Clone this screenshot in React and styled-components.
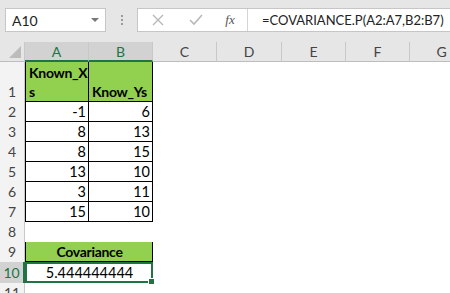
import React from 'react';
import styled, { createGlobalStyle } from 'styled-components';

const GlobalStyle = createGlobalStyle`
  html, body {
    margin: 0;
    padding: 0;
    background: #ffffff;
    overflow: hidden;
  }
  body {
    font-family: Lato, "Open Sans", sans-serif;
  }
`;

const COLS = '25px 64px 64px 64px 65px 64px 64px 64px';
const GREEN = '#217346';
const FILL = '#92d050';

const Window = styled.div`
  width: 450px;
  height: 293px;
  overflow: hidden;
  display: flex;
  flex-direction: column;
  background: #ffffff;
`;

const FormulaBar = styled.div`
  height: 42px;
  flex: none;
  background: #e6e6e6;
  display: flex;
  align-items: flex-start;
  padding-top: 8px;
  box-sizing: border-box;
`;

const NameBox = styled.div`
  margin-left: 5px;
  width: 101px;
  flex: none;
  height: 24px;
  box-sizing: border-box;
  background: #ffffff;
  border: 1px solid #c6c6c6;
  display: flex;
  align-items: center;
  justify-content: space-between;
  padding: 0 6px 0 6px;
  font-size: 14px;
  color: #222;
`;

const Caret = styled.span`
  width: 0;
  height: 0;
  border-left: 4px solid transparent;
  border-right: 4px solid transparent;
  border-top: 4px solid #777;
`;

const Grip = styled.div`
  width: 31px;
  flex: none;
  height: 24px;
  display: flex;
  flex-direction: column;
  align-items: center;
  justify-content: center;
  gap: 2px;
  span {
    width: 2px;
    height: 2px;
    background: #9a9a9a;
  }
`;

const FormulaBox = styled.div`
  flex: 1;
  min-width: 0;
  height: 24px;
  box-sizing: border-box;
  background: #ffffff;
  border: 1px solid #c6c6c6;
  border-right: none;
  display: flex;
  align-items: center;
  overflow: hidden;
`;

const FxButtons = styled.div`
  width: 110px;
  flex: none;
  height: 100%;
  display: flex;
  align-items: center;
  position: relative;
  &::after {
    content: '';
    position: absolute;
    right: 0;
    top: 0;
    bottom: 0;
    width: 1px;
    background: #d4d4d4;
  }
`;

const IconSlot = styled.div`
  width: ${({ $w }) => $w}px;
  display: flex;
  justify-content: center;
  align-items: center;
`;

const FxGlyph = styled.span`
  font-family: "Liberation Serif", serif;
  font-style: italic;
  font-size: 13px;
  color: #555;
`;

const FormulaText = styled.div`
  padding-left: 14px;
  font-size: 13px;
  color: #222;
  white-space: nowrap;
`;

const Sheet = styled.div`
  flex: 1;
  display: flex;
  flex-direction: column;
`;

const Row = styled.div`
  display: grid;
  grid-template-columns: ${COLS};
  grid-template-rows: ${({ $h }) => $h}px;
  height: ${({ $h }) => $h}px;
  flex: none;
`;

const Corner = styled.div`
  background: #e6e6e6;
  border-right: 1px solid #c8c8c8;
  border-bottom: 1px solid #bdbdbd;
  position: relative;
  &::after {
    content: '';
    position: absolute;
    right: 3px;
    bottom: 3px;
    width: 0;
    height: 0;
    border-left: 12px solid transparent;
    border-bottom: 12px solid #bcbcbc;
  }
`;

const ColHead = styled.div`
  background: ${({ $sel }) => ($sel ? '#d2d2d2' : '#e6e6e6')};
  color: ${({ $sel }) => ($sel ? GREEN : '#444')};
  border-right: 1px solid #c8c8c8;
  border-bottom: ${({ $sel }) => ($sel ? `2px solid ${GREEN}` : '1px solid #bdbdbd')};
  display: flex;
  align-items: center;
  justify-content: center;
  font-size: 14px;
  box-sizing: border-box;
`;

const RowHead = styled.div`
  background: ${({ $sel }) => ($sel ? '#d2d2d2' : '#f3f3f3')};
  color: ${({ $sel }) => ($sel ? GREEN : '#444')};
  border-right: ${({ $sel }) => ($sel ? `2px solid ${GREEN}` : '1px solid #c8c8c8')};
  display: flex;
  align-items: flex-end;
  justify-content: center;
  padding-bottom: 1px;
  font-size: 14px;
  line-height: 18px;
  box-sizing: border-box;
  overflow: hidden;
`;

const Cell = styled.div`
  grid-column: span ${({ $span }) => $span || 1};
  background: ${({ $fill }) => $fill || '#ffffff'};
  box-sizing: border-box;
  min-height: 0;
  overflow: hidden;
  border-left: ${({ $first }) => ($first ? '1px solid #000' : 'none')};
  border-right: ${({ $box }) => ($box ? '1px solid #000' : 'none')};
  border-bottom: ${({ $box }) => ($box ? '1px solid #000' : 'none')};
  display: flex;
  align-items: flex-end;
  justify-content: ${({ $align }) =>
    $align === 'right' ? 'flex-end' : $align === 'center' ? 'center' : 'flex-start'};
  padding: 0 2px 0 3px;
  font-size: ${({ $bold }) => ($bold ? '14px' : '14.5px')};
  letter-spacing: ${({ $bold }) => ($bold ? '-0.3px' : '0')};
  font-weight: ${({ $bold }) => ($bold ? 700 : 400)};
  color: #000;
  line-height: 19px;
  white-space: nowrap;
`;

const Selected = styled(Cell)`
  border: 2px solid ${GREEN};
  position: relative;
  align-items: center;
  overflow: visible;
  &::after {
    content: '';
    position: absolute;
    right: -4px;
    bottom: -4px;
    width: 5px;
    height: 5px;
    background: ${GREEN};
    border: 1px solid #ffffff;
  }
`;

const columns = ['A', 'B', 'C', 'D', 'E', 'F', 'G'];
const data = [
  [-1, 6],
  [8, 13],
  [8, 15],
  [13, 10],
  [3, 11],
  [15, 10],
];

const Blank = ({ count }) =>
  Array.from({ length: count }).map((_, i) => <Cell key={`b${i}`} />);

const App = () => (
  <Window>
    <GlobalStyle />
    <FormulaBar>
      <NameBox>
        <span>A10</span>
        <Caret />
      </NameBox>
      <Grip>
        <span />
        <span />
        <span />
      </Grip>
      <FormulaBox>
        <FxButtons>
          <IconSlot $w={40}>
            <svg width="12" height="12" viewBox="0 0 12 12">
              <path d="M1 1 L11 11 M11 1 L1 11" stroke="#b8b8b8" strokeWidth="1.4" />
            </svg>
          </IconSlot>
          <IconSlot $w={36}>
            <svg width="14" height="12" viewBox="0 0 14 12">
              <path d="M1 6 L5 10 L13 1" stroke="#b8b8b8" strokeWidth="1.6" fill="none" />
            </svg>
          </IconSlot>
          <IconSlot $w={32}>
            <FxGlyph>fx</FxGlyph>
          </IconSlot>
        </FxButtons>
        <FormulaText>=COVARIANCE.P(A2:A7,B2:B7)</FormulaText>
      </FormulaBox>
    </FormulaBar>

    <Sheet>
      <Row $h={20}>
        <Corner />
        {columns.map((c) => (
          <ColHead key={c} $sel={c === 'A' || c === 'B'}>
            {c}
          </ColHead>
        ))}
      </Row>

      <Row $h={40}>
        <RowHead>1</RowHead>
        <Cell $fill={FILL} $box $first $bold>
          <span>
            Known_X
            <br />s
          </span>
        </Cell>
        <Cell $fill={FILL} $box $bold>Know_Ys</Cell>
        <Blank count={5} />
      </Row>

      {data.map(([x, y], i) => (
        <Row $h={20} key={i}>
          <RowHead>{i + 2}</RowHead>
          <Cell $box $first $align="right">{x}</Cell>
          <Cell $box $align="right">{y}</Cell>
          <Blank count={5} />
        </Row>
      ))}

      <Row $h={20}>
        <RowHead>8</RowHead>
        <Blank count={7} />
      </Row>

      <Row $h={20}>
        <RowHead>9</RowHead>
        <Cell $span={2} $fill={FILL} $box $first $bold $align="center">Covariance</Cell>
        <Blank count={5} />
      </Row>

      <Row $h={21}>
        <RowHead $sel>10</RowHead>
        <Selected $span={2} $align="center">5.444444444</Selected>
        <Blank count={5} />
      </Row>

      <Row $h={20}>
        <RowHead>11</RowHead>
        <Blank count={7} />
      </Row>
    </Sheet>
  </Window>
);

export default App;
